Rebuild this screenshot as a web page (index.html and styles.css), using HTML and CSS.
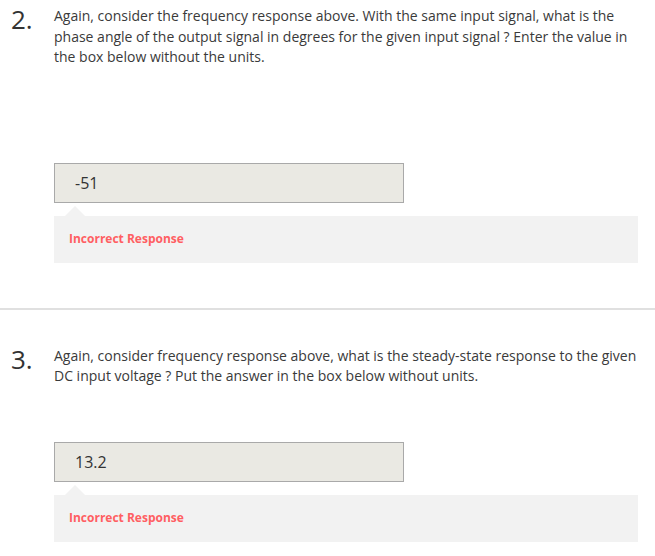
FILE: index.html
```html
<!DOCTYPE html>
<html lang="en">
<head>
<meta charset="utf-8">
<title>Quiz</title>
<link rel="stylesheet" href="styles.css">
</head>
<body>
<section class="question">
  <div class="num">2.</div>
  <div class="content">
    <p class="prompt">Again, consider the frequency response above. With the same input signal, what is the phase angle of the output signal in degrees for the given input signal ? Enter the value in the box below without the units.</p>
    <div class="answer answer-far">-51</div>
    <div class="feedback">Incorrect Response</div>
  </div>
</section>
<hr class="divider">
<section class="question question-next">
  <div class="num">3.</div>
  <div class="content">
    <p class="prompt">Again, consider frequency response above, what is the steady-state response to the given DC input voltage ? Put the answer in the box below without units.</p>
    <div class="answer">13.2</div>
    <div class="feedback">Incorrect Response</div>
  </div>
</section>
</body>
</html>
```

FILE: styles.css
```css
html, body {
  margin: 0;
  padding: 0;
  background: #ffffff;
}

body {
  font-family: "Open Sans", "Liberation Sans", sans-serif;
  color: #333333;
}

.question {
  display: flex;
  align-items: flex-start;
  padding: 6px 17px 45px 11px;
}

.question-next {
  padding-top: 36px;
  padding-bottom: 14px;
}

.num {
  width: 43px;
  flex: 0 0 43px;
  font-size: 26px;
  line-height: 26px;
  color: #333333;
}

.content {
  flex: 1 1 auto;
  min-width: 0;
}

.prompt {
  margin: 0;
  font-size: 14px;
  line-height: 20.5px;
  color: #3a3a3a;
}

.answer {
  margin-top: 55px;
  width: 308px;
  height: 38px;
  padding: 0 20px;
  border: 1px solid #a9a9a9;
  background: #eae9e3;
  font-size: 16px;
  line-height: 38px;
  color: #333333;
}

.answer-far {
  margin-top: 95px;
}

.feedback {
  position: relative;
  margin-top: 13px;
  background: #f2f2f2;
  padding: 13px 15px 14px;
  font-size: 12px;
  line-height: 20px;
  font-weight: 700;
  color: #ff5e62;
}

.feedback::before {
  content: "";
  position: absolute;
  top: -10px;
  left: 11px;
  width: 0;
  height: 0;
  border-left: 10px solid transparent;
  border-right: 10px solid transparent;
  border-bottom: 10px solid #f2f2f2;
}

.divider {
  margin: 0;
  border: 0;
  height: 2px;
  background: #e0e0e0;
}
```
